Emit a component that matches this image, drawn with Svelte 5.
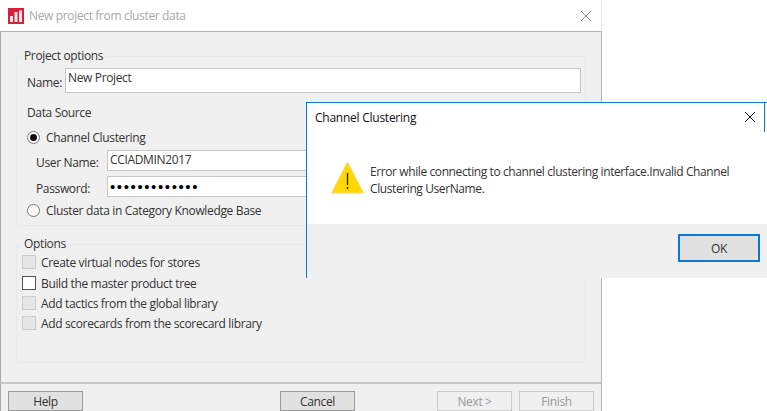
<script>
    const options = [
        { label: 'Create virtual nodes for stores', enabled: false },
        { label: 'Build the master product tree', enabled: true },
        { label: 'Add tactics from the global library', enabled: false },
        { label: 'Add scorecards from the scorecard library', enabled: false },
    ];
</script>

<div class="screen">
    <div class="wizard">
        <div class="titlebar">
            <svg class="app-icon" width="16" height="16" viewBox="0 0 16 16">
                <rect width="16" height="16" fill="#d81f3c" />
                <rect x="2" y="8" width="3" height="6" fill="#fbe4e8" />
                <rect x="6.5" y="4" width="3" height="10" fill="#fbe4e8" />
                <rect x="11" y="2.5" width="3" height="11.5" fill="#fbe4e8" />
            </svg>
            <span class="title">New project from cluster data</span>
            <svg class="close" width="12" height="12" viewBox="0 0 12 12">
                <path d="M1 1 L11 11 M11 1 L1 11" stroke="#8a8a8a" stroke-width="1" fill="none" />
            </svg>
        </div>

        <div class="content">
            <fieldset class="project">
                <legend>Project options</legend>
                <div class="name-row">
                    <span>Name:</span>
                    <div class="input name">New Project</div>
                </div>
                <div class="section">Data Source</div>
                <div class="radio-row first">
                    <span class="radio on"></span>
                    <span>Channel Clustering</span>
                </div>
                <div class="cred-row">
                    <span class="cred-label">User Name:</span>
                    <div class="input cred">CCIADMIN2017</div>
                </div>
                <div class="cred-row second">
                    <span class="cred-label">Password:</span>
                    <div class="input cred dots">•••••••••••••</div>
                </div>
                <div class="radio-row">
                    <span class="radio"></span>
                    <span>Cluster data in Category Knowledge Base</span>
                </div>
            </fieldset>

            <fieldset class="options">
                <legend>Options</legend>
                {#each options as opt}
                    <div class="check-row">
                        <span class="check" class:enabled={opt.enabled}></span>
                        <span>{opt.label}</span>
                    </div>
                {/each}
            </fieldset>
        </div>

        <div class="footer">
            <button class="btn">Help</button>
            <div class="spacer-a"></div>
            <button class="btn">Cancel</button>
            <div class="spacer-b"></div>
            <button class="btn disabled">Next &gt;</button>
            <button class="btn disabled">Finish</button>
        </div>
    </div>

    <div class="dialog">
        <div class="dialog-title">
            <span>Channel Clustering</span>
            <svg class="close" width="12" height="12" viewBox="0 0 12 12">
                <path d="M1 1 L11 11 M11 1 L1 11" stroke="#111" stroke-width="1" fill="none" />
            </svg>
        </div>
        <div class="dialog-body">
            <svg class="warn" width="33" height="33" viewBox="0 0 33 33">
                <path d="M16.5 1 L32.5 32 L0.5 32 Z" fill="#ffd800" stroke="#f6dc7a" stroke-width="1" />
                <path d="M16.5 12 L16.5 24" stroke="#222" stroke-width="1.3" />
                <rect x="15.7" y="26" width="1.6" height="2" fill="#222" />
            </svg>
            <p>Error while connecting to channel clustering interface.Invalid Channel Clustering UserName.</p>
        </div>
        <div class="dialog-footer">
            <button class="btn ok">OK</button>
        </div>
        <div class="edge"></div>
    </div>
</div>

<style>
    :global(body) {
        background: #fff;
    }

    .screen {
        position: relative;
        width: 767px;
        height: 411px;
        overflow: hidden;
        background: #fff;
        font-family: "Open Sans", "Liberation Sans", sans-serif;
        font-size: 12px;
        letter-spacing: -0.35px;
        color: #333;
    }

    .wizard {
        width: 602px;
        height: 411px;
        display: flex;
        flex-direction: column;
    }

    .titlebar {
        height: 31px;
        flex: none;
        display: flex;
        align-items: center;
        padding-left: 8px;
        gap: 5px;
        background: #fff;
        border-bottom: 1px solid #b4b4b4;
        border-right: 1px solid #eee;
        box-sizing: content-box;
    }

    .title {
        color: #a9a9a9;
    }

    .close {
        margin-left: auto;
        margin-right: 9px;
    }

    .content {
        flex: 1;
        background: #f0f0f0;
        border-left: 1px solid #a8a8a8;
        border-right: 1px solid #b4b4b4;
        padding: 16px 15px 0 15px;
        display: flex;
        flex-direction: column;
    }

    fieldset {
        margin: 0;
        padding: 0;
        min-width: 0;
        border: 1px solid #e3ebf1;
        border-radius: 3px;
    }

    legend {
        margin-left: 5px;
        padding: 0 2px;
        line-height: 16px;
    }

    .project {
        height: 178px;
        box-sizing: border-box;
        padding: 0 3px 0 10px;
    }

    .project legend {
        margin-left: -5px;
    }

    .name-row {
        display: flex;
        align-items: flex-end;
        gap: 3px;
        height: 25px;
        margin-top: 4px;
    }

    .name-row span {
        position: relative;
        top: -2px;
    }

    .input {
        background: #fff;
        border: 1px solid #c6c6c6;
        box-sizing: border-box;
        padding: 1px 2px 0;
        color: #333;
        line-height: 16px;
    }

    .name {
        width: 516px;
        height: 25px;
    }

    .section {
        margin-top: 12px;
        line-height: 16px;
    }

    .radio-row {
        display: flex;
        align-items: center;
        gap: 6px;
        height: 16px;
        margin-top: 5px;
    }

    .radio-row.first {
        margin-top: 8px;
    }

    .radio {
        width: 11px;
        height: 11px;
        border: 1px solid #777;
        border-radius: 50%;
        background: #fff;
        position: relative;
        flex: none;
    }

    .radio.on::after {
        content: '';
        position: absolute;
        left: 2px;
        top: 2px;
        width: 7px;
        height: 7px;
        border-radius: 50%;
        background: #111;
    }

    .cred-row {
        display: flex;
        align-items: flex-end;
        margin-top: 5px;
        padding-left: 9px;
    }

    .cred-label {
        width: 71px;
    }

    .cred {
        width: 474px;
        height: 21px;
    }

    .dots {
        color: #000;
        font-family: "Liberation Sans", sans-serif;
        font-size: 15px;
        letter-spacing: 1.6px;
        line-height: 17px;
    }

    .options {
        margin-top: 10px;
        height: 127px;
        box-sizing: border-box;
        padding: 0 0 0 5px;
    }

    .options legend {
        margin-left: 0;
    }

    .check-row {
        display: flex;
        align-items: center;
        gap: 5px;
        height: 20px;
    }

    .check-row:first-of-type {
        margin-bottom: 1px;
    }

    .check {
        width: 14px;
        height: 14px;
        box-sizing: border-box;
        border: 1px solid #ccc;
        background: #e6e6e6;
        flex: none;
    }

    .check.enabled {
        background: #fff;
        border-color: #555;
    }

    .footer {
        height: 29px;
        flex: none;
        background: #f0f0f0;
        border-top: 2px solid #c8c8c8;
        border-left: 1px solid #a8a8a8;
        border-right: 1px solid #b4b4b4;
        display: flex;
        align-items: flex-start;
        padding: 7px 0 0 7px;
        box-sizing: border-box;
    }

    .btn {
        width: 75px;
        height: 20px;
        flex: none;
        box-sizing: border-box;
        border: 1px solid #999;
        background: #e1e1e1;
        color: #333;
        font: inherit;
        letter-spacing: inherit;
        padding: 1px 0 0;
        line-height: 18px;
    }

    .btn.disabled {
        background: #f0f0f0;
        border-color: #ccc;
        color: #999;
    }

    .btn.disabled + .btn.disabled {
        margin-left: 7px;
    }

    .spacer-a {
        width: 197px;
    }

    .spacer-b {
        width: 82px;
    }

    .dialog {
        position: absolute;
        left: 306px;
        top: 102px;
        width: 461px;
        height: 176px;
        box-sizing: border-box;
        border-top: 1px solid #0a78d7;
        border-left: 1px solid #0a78d7;
        background: #fff;
        display: flex;
        flex-direction: column;
    }

    .edge {
        position: absolute;
        right: 2px;
        top: 0;
        width: 1px;
        height: 29px;
        background: #0a78d7;
    }

    .dialog-title {
        height: 28px;
        flex: none;
        display: flex;
        align-items: center;
        padding-left: 8px;
        color: #111;
        letter-spacing: -0.25px;
    }

    .dialog-title .close {
        margin-right: 11px;
    }

    .dialog-body {
        height: 93px;
        flex: none;
        display: flex;
        padding: 29px 24px 0 24px;
        box-sizing: border-box;
    }

    .warn {
        flex: none;
        margin-top: 1px;
    }

    .dialog-body p {
        margin: 0 0 0 6px;
        line-height: 17px;
        padding-top: 3px;
        letter-spacing: -0.4px;
    }

    .dialog-footer {
        flex: 1;
        background: #f0f0f0;
        display: flex;
        justify-content: flex-end;
        align-items: flex-start;
        padding: 10px 7px 0 0;
    }

    .btn.ok {
        width: 82px;
        height: 28px;
        border: 2px solid #0a78d7;
        background: #e1e1e1;
    }
</style>
